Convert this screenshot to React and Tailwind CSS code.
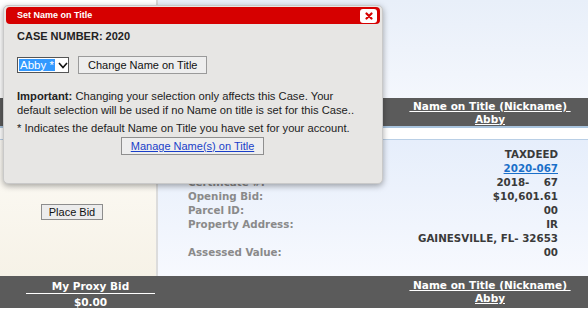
import React from 'react';

const verdana = { fontFamily: '"DejaVu Sans", Verdana, sans-serif' };

function DetailRow({ label, value, link }) {
    return (
        <div className="flex justify-between h-[14px] items-center">
            <span className="text-[#8a8a8a]">{label}</span>
            {link ? (
                <a href="#" className="text-[#1a6fc9] underline">{value}</a>
            ) : (
                <span className="text-[#3a3a3a] whitespace-pre">{value}</span>
            )}
        </div>
    );
}

function NameOnTitle() {
    return (
        <div className="flex flex-col items-center text-white font-bold text-[10.5px] leading-[13px]">
            <span className="underline whitespace-pre"> Name on Title (Nickname) </span>
            <span className="underline">Abby</span>
        </div>
    );
}

function Modal() {
    return (
        <div
            className="absolute left-[3px] top-[5px] w-[380px] h-[179px] rounded-[5px] bg-[#e7e6e4] border border-[#c9c9c9] shadow-[0_2px_6px_rgba(0,0,0,0.35)]"
            style={{ fontFamily: '"Liberation Sans", Arial, sans-serif' }}
        >
            <div className="mx-[2px] mt-[1px] h-[17px] rounded-[4px] bg-[#d60000] flex items-center justify-between pl-[11px] pr-[3px]">
                <span className="text-white font-bold text-[9px]">Set Name on Title</span>
                <div className="w-[17px] h-[14px] rounded-[3px] bg-white flex items-center justify-center">
                    <svg width="8" height="8" viewBox="0 0 8 8">
                        <path d="M1.5 1.5L6.5 6.5M6.5 1.5L1.5 6.5" stroke="#d60000" strokeWidth="2.2" strokeLinecap="round" />
                    </svg>
                </div>
            </div>
            <div className="px-[13px] text-[11px] text-[#222]">
                <div className="mt-[6px] font-bold leading-[13px]">CASE NUMBER: 2020</div>
                <div className="mt-[13px] h-[18px] flex items-center gap-[9px]">
                    <div className="w-[52px] h-[16px] bg-white border border-[#555] flex items-center whitespace-nowrap">
                        <span className="ml-[1px] px-[1px] bg-[#3399ff] text-white text-[11.5px] leading-[12px]">Abby *</span>
                        <svg className="ml-[3px]" width="10" height="7" viewBox="0 0 10 7">
                            <path d="M1 1L5 5.5L9 1" stroke="#111" strokeWidth="1.6" fill="none" />
                        </svg>
                    </div>
                    <button className="h-[18px] px-[9px] bg-[#eeeeee] border border-[#9a9a9a] text-[11px] leading-[14px] text-[#111] whitespace-nowrap">Change Name on Title</button>
                </div>
                <p className="mt-[15px] text-[11.2px] leading-[14px] whitespace-nowrap">
                    <b>Important:</b> Changing your selection only affects this Case. Your
                    <br />
                    default selection will be used if no Name on title is set for this Case..
                </p>
                <p className="mt-[4px] text-[11.2px] leading-[14px] whitespace-nowrap">
                    * Indicates the default Name on Title you have set for your account.
                </p>
                <div className="mt-[2px] flex justify-center pr-[1px]">
                    <button className="h-[18px] px-[9px] bg-[#eeeeee] border border-[#8f8f8f] text-[11px] leading-[14px] text-[#1a3fc9] underline whitespace-nowrap">Manage Name(s) on Title</button>
                </div>
            </div>
        </div>
    );
}

export default function App() {
    return (
        <div className="relative w-[588px] h-[310px] overflow-hidden bg-white" style={verdana}>
            <div className="flex h-[98px]">
                <div className="w-[156px] bg-white" />
                <div className="w-[2px] bg-[#d8d8d8]" />
                <div className="flex-1 bg-gradient-to-b from-[#e8eff9] to-[#f4f7fd]" />
            </div>
            <div className="h-[30px] bg-[#5b5b5b] border-b-2 border-[#a9c4de] flex">
                <div className="w-[392px]" />
                <div className="flex-1 flex justify-center items-center pt-[1px]">
                    <NameOnTitle />
                </div>
            </div>
            <div className="h-[12px] bg-white border-b border-[#b9cfe6]" />
            <div className="flex h-[136px]">
                <div className="w-[156px] bg-gradient-to-b from-[#fdfbf6] to-[#f6f2e7] flex justify-center">
                    <button
                        className="mt-[64px] h-[16px] px-[7px] bg-[#ececec] border border-[#8d8d8d] text-[11px] text-[#111] leading-[14px] ml-[-12px] whitespace-nowrap"
                        style={{ fontFamily: '"Liberation Sans", Arial, sans-serif' }}
                    >
                        Place Bid
                    </button>
                </div>
                <div className="w-[2px] bg-[#dcdcdc]" />
                <div className="flex-1 bg-gradient-to-b from-[#e6eefb] to-[#f7f9fe] pl-[30px] pr-[30px] pt-[8px] text-[10.3px] font-bold">
                    {/* labels of the first rows sit under the dialog */}
                    <DetailRow label="" value="TAXDEED" />
                    <DetailRow label="" value="2020-067" link />
                    <DetailRow label="Certificate #:" value="2018-    67" />
                    <DetailRow label="Opening Bid:" value="$10,601.61" />
                    <DetailRow label="Parcel ID:" value="00" />
                    <DetailRow label="Property Address:" value="IR" />
                    <DetailRow label="" value="GAINESVILLE, FL- 32653" />
                    <DetailRow label="Assessed Value:" value="00" />
                </div>
            </div>
            <div className="h-[32px] bg-[#5b5b5b] flex">
                <div className="w-[158px] pl-[26px] pt-[4px] text-white font-bold text-[10.5px] leading-[12px]">
                    <div className="w-[129px] flex flex-col items-center">
                        <span>My Proxy Bid</span>
                        <div className="w-full h-[1px] bg-white mt-[1px]" />
                        <span className="mt-[2px]">$0.00</span>
                    </div>
                </div>
                <div className="w-[234px]" />
                <div className="flex-1 flex justify-center items-start pt-[3px]">
                    <NameOnTitle />
                </div>
            </div>
            <Modal />
        </div>
    );
}
